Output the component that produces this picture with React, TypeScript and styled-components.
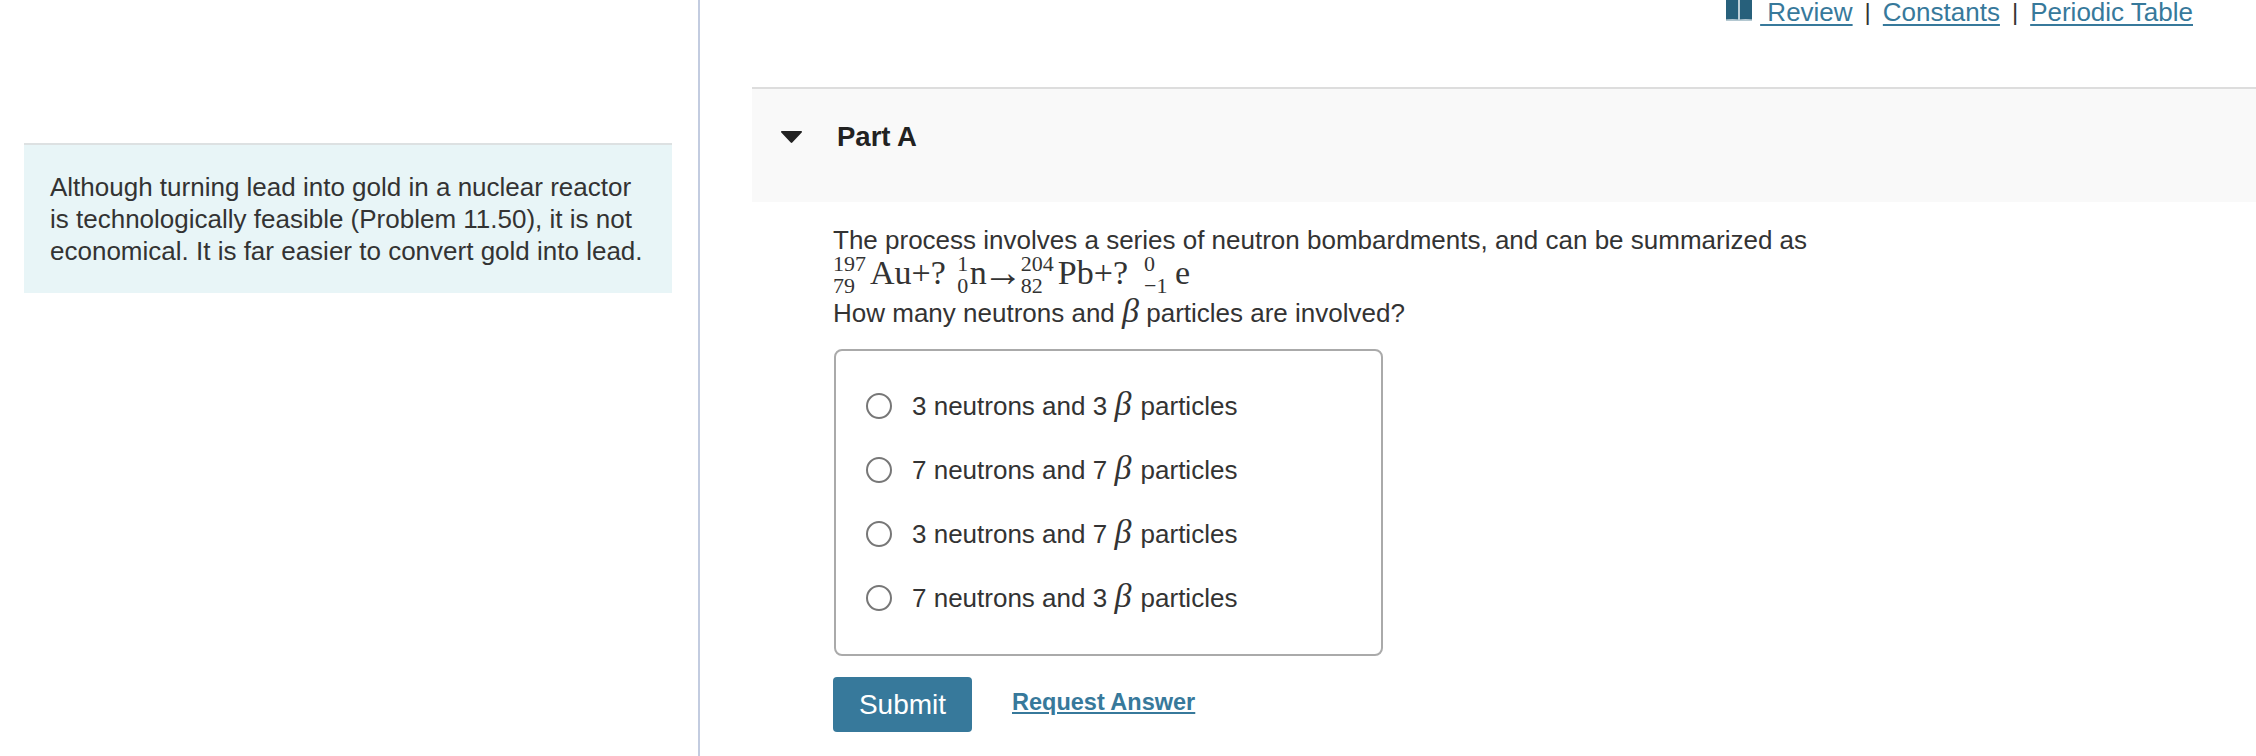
import React from 'react';
import styled, { createGlobalStyle } from 'styled-components';

const Global = createGlobalStyle`
  html, body {
    margin: 0;
    padding: 0;
    background: #fff;
  }
  body {
    font-family: "Liberation Sans", Arial, sans-serif;
    color: #333;
  }
`;

const choices = [
  ['3 neutrons and 3', 'particles'],
  ['7 neutrons and 7', 'particles'],
  ['3 neutrons and 7', 'particles'],
  ['7 neutrons and 3', 'particles'],
];

const BookIcon = () => (
  <svg width="26" height="21" viewBox="0 0 26 21">
    <path fill="#27607b" d="M0 0h12.300v19.500C9 18.800 4 18.800 0 19.500zM13.700 0H26v19.500c-4-.7-9-.7-12.300 0z" />
    <path fill="#27607b" opacity=".35" d="M0 19.500c4-.7 9-.7 12.300 0h1.400c3.300-.7 8.300-.7 12.300 0V21H0z" />
  </svg>
);

const Caret = () => (
  <svg width="21" height="12" viewBox="0 0 21 12">
    <path fill="#222" d="M1 0h19c.9 0 1.300 1 .7 1.600L11.300 11.600c-.5.500-1.100.500-1.600 0L.3 1.600C-.3 1 .1 0 1 0z" />
  </svg>
);

const App: React.FC = () => {
  return (
    <Page>
      <Global />
      <LeftColumn>
        <Intro>
          Although turning lead into gold in a nuclear reactor is technologically feasible (Problem
          11.50), it is not economical. It is far easier to convert gold into lead.
        </Intro>
      </LeftColumn>
      <RightColumn>
        <TopLinks>
          <BookIcon />
          <TopLink href="#">&nbsp;Review</TopLink>
          <Sep>|</Sep>
          <TopLink href="#">Constants</TopLink>
          <Sep>|</Sep>
          <TopLink href="#">Periodic Table</TopLink>
        </TopLinks>
        <PartHeader>
          <Caret />
          <PartTitle>Part A</PartTitle>
        </PartHeader>
        <Question>
          <p>The process involves a series of neutron bombardments, and can be summarized as</p>
          <Formula>
            <Scripts $width={37}>
              <span>197</span>
              <span>79</span>
            </Scripts>
            Au+?
            <Scripts $width={14} $gap={10} $center>
              <span>1</span>
              <span>0</span>
            </Scripts>
            n
            <Arrow>→</Arrow>
            <Scripts $width={37} $gap={7}>
              <span>204</span>
              <span>82</span>
            </Scripts>
            Pb+?
            <Scripts $width={31} $gap={16}>
              <span>0</span>
              <span>−1</span>
            </Scripts>
            e
          </Formula>
          <p>
            How many neutrons and <Beta>β</Beta> particles are involved?
          </p>
        </Question>
        <Choices>
          {choices.map(([before, after]) => (
            <Choice key={before}>
              <Radio />
              <span>
                {before} <Beta>β</Beta> {after}
              </span>
            </Choice>
          ))}
        </Choices>
        <Actions>
          <SubmitButton>Submit</SubmitButton>
          <AnswerLink href="#">Request Answer</AnswerLink>
        </Actions>
      </RightColumn>
    </Page>
  );
};

const Page = styled.div`
  display: flex;
  width: 2256px;
  height: 756px;
  overflow: hidden;
`;

const LeftColumn = styled.aside`
  width: 700px;
  flex-shrink: 0;
  padding: 143px 26px 0 24px;
  box-sizing: border-box;
  border-right: 2px solid #c3cce0;
`;

const Intro = styled.div`
  height: 150px;
  box-sizing: border-box;
  padding: 26px 26px 0;
  background: #e8f5f7;
  border-top: 2px solid #dde1e2;
  font-size: 26px;
  line-height: 32px;
`;

const RightColumn = styled.main`
  flex: 1;
  min-width: 0;
  padding-left: 52px;
`;

const TopLinks = styled.nav`
  height: 87px;
  box-sizing: border-box;
  display: flex;
  align-items: flex-start;
  padding-right: 63px;
  justify-content: flex-end;
  font-size: 26px;
  line-height: 24px;

  svg {
    margin-right: 8px;
  }
`;

const TopLink = styled.a`
  color: #37799b;
  text-decoration: underline;
  text-underline-offset: 3px;
`;

const Sep = styled.span`
  margin: 0 12px;
  color: #333;
  font-size: 24px;
`;

const PartHeader = styled.header`
  height: 115px;
  box-sizing: border-box;
  display: flex;
  align-items: center;
  gap: 35px;
  padding: 0 0 18px 29px;
  background: #f9f9f9;
  border-top: 2px solid #ddd;
`;

const PartTitle = styled.h2`
  margin: 0;
  font-size: 27.5px;
  font-weight: 700;
  color: #222;
`;

const Question = styled.section`
  margin: 22px 0 0 81px;
  font-size: 26px;
  line-height: 32px;
  color: #333;

  p {
    margin: 0;
  }
`;

const Formula = styled.div`
  display: flex;
  align-items: center;
  height: 41px;
  box-sizing: border-box;
  padding-bottom: 8px;
  font-family: "Liberation Serif", "Times New Roman", serif;
  font-size: 34px;
  color: #333;
`;

const Scripts = styled.span<{ $width: number; $gap?: number; $center?: boolean }>`
  display: inline-flex;
  flex-direction: column;
  align-items: ${(p) => (p.$center ? 'center' : 'flex-start')};
  width: ${(p) => p.$width}px;
  margin-top: 5px;
  margin-left: ${(p) => p.$gap ?? 0}px;
  font-size: 22px;
  line-height: 22px;
`;

const Arrow = styled.span`
  margin-left: -4px;
  letter-spacing: -9px;
  font-size: 40px;
  line-height: 30px;
`;

const Beta = styled.i`
  font-family: "Liberation Serif", "Times New Roman", serif;
  font-size: 34px;
  line-height: 0;
`;

const Choices = styled.div`
  display: flex;
  flex-direction: column;
  gap: 14px;
  width: 549px;
  height: 307px;
  box-sizing: border-box;
  margin: 20px 0 0 82px;
  padding: 30px 0 0 30px;
  border: 2px solid #aaa;
  border-radius: 8px;
`;

const Choice = styled.label`
  display: flex;
  align-items: center;
  gap: 20px;
  height: 50px;
  font-size: 26px;
  color: #333;

  i {
    margin-right: 2px;
  }
`;

const Radio = styled.span`
  width: 26px;
  height: 26px;
  box-sizing: border-box;
  border: 2px solid #777;
  border-radius: 50%;
  background: #fff;
`;

const Actions = styled.div`
  display: flex;
  align-items: center;
  gap: 40px;
  margin: 21px 0 0 81px;
`;

const SubmitButton = styled.button`
  width: 139px;
  height: 55px;
  border: 0;
  border-radius: 4px;
  background: #37799b;
  color: #fff;
  font-family: inherit;
  font-size: 28px;
`;

const AnswerLink = styled.a`
  padding-bottom: 5px;
  font-size: 23.5px;
  font-weight: 700;
  color: #37799b;
  text-decoration: underline;
`;

export default App;
